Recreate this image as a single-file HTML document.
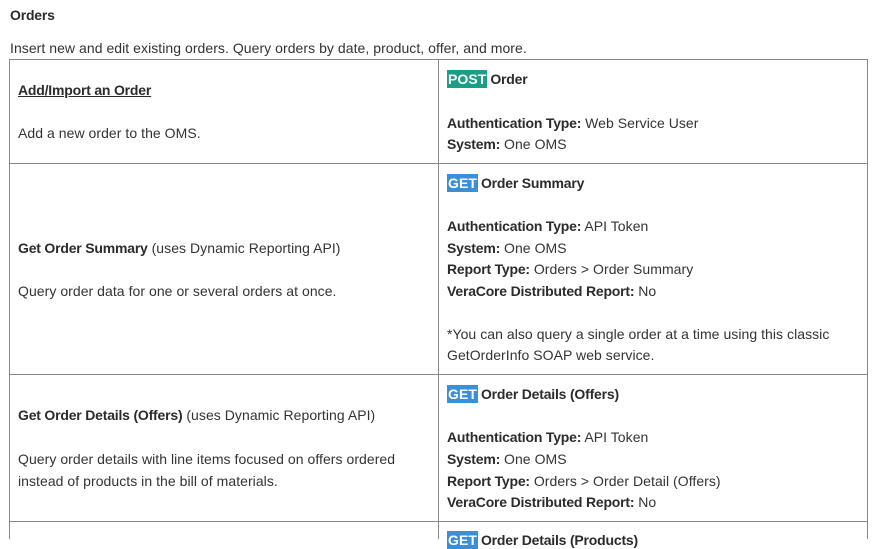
<!DOCTYPE html>
<html><head><meta charset="utf-8"><style>
*{margin:0;padding:0;box-sizing:border-box}
body{width:876px;height:539px;overflow:hidden;background:#fff;position:relative;font-family:"Liberation Sans",sans-serif;font-size:14px;color:#333;letter-spacing:0.05px}
.t{position:absolute;white-space:nowrap;line-height:17px}
b{font-weight:bold;color:#2b2b2b;letter-spacing:-0.2px}
.h{position:absolute;background:#888}
.v{position:absolute;width:1px;background:#888}
.bd{display:inline-block;color:#fff;font-weight:bold;padding:0 1px;line-height:18px;margin-right:3px}
.post{background:#1a9e85}.get{background:#3b8fd6}
</style></head><body>
<div class="t" style="left:10px;top:7px"><b>Orders</b></div>
<div class="t" style="left:10px;top:40px">Insert new and edit existing orders. Query orders by date, product, offer, and more.</div>
<div class="h" style="left:9px;top:59px;width:859px;height:1px"></div>
<div class="h" style="left:9px;top:163px;width:859px;height:1px"></div>
<div class="h" style="left:9px;top:374px;width:859px;height:1px"></div>
<div class="h" style="left:9px;top:521px;width:859px;height:1px"></div>
<div class="v" style="left:9px;top:59px;height:480px"></div>
<div class="v" style="left:438px;top:59px;height:480px"></div>
<div class="v" style="left:867px;top:59px;height:480px"></div>

<div class="t" style="left:18px;top:82px"><b style="text-decoration:underline">Add/Import an Order</b></div>
<div class="t" style="left:18px;top:125px">Add a new order to the OMS.</div>
<div class="t" style="left:447px;top:70px"><span class="bd post">POST</span><b>Order</b></div>
<div class="t" style="left:447px;top:115px"><b>Authentication Type:</b> Web Service User</div>
<div class="t" style="left:447px;top:136px"><b>System:</b> One OMS</div>

<div class="t" style="left:18px;top:240px"><b>Get Order Summary</b> (uses Dynamic Reporting API)</div>
<div class="t" style="left:18px;top:283px">Query order data for one or several orders at once.</div>
<div class="t" style="left:447px;top:174px"><span class="bd get">GET</span><b>Order Summary</b></div>
<div class="t" style="left:447px;top:218px"><b>Authentication Type:</b> API Token</div>
<div class="t" style="left:447px;top:240px"><b>System:</b> One OMS</div>
<div class="t" style="left:447px;top:261px"><b>Report Type:</b> Orders &gt; Order Summary</div>
<div class="t" style="left:447px;top:283px"><b>VeraCore Distributed Report:</b> No</div>
<div class="t" style="left:447px;top:326px">*You can also query a single order at a time using this classic</div>
<div class="t" style="left:447px;top:347px">GetOrderInfo SOAP web service.</div>

<div class="t" style="left:18px;top:407px"><b>Get Order Details (Offers)</b> (uses Dynamic Reporting API)</div>
<div class="t" style="left:18px;top:451px">Query order details with line items focused on offers ordered</div>
<div class="t" style="left:18px;top:473px">instead of products in the bill of materials.</div>
<div class="t" style="left:447px;top:385px"><span class="bd get">GET</span><b>Order Details (Offers)</b></div>
<div class="t" style="left:447px;top:429px"><b>Authentication Type:</b> API Token</div>
<div class="t" style="left:447px;top:451px"><b>System:</b> One OMS</div>
<div class="t" style="left:447px;top:473px"><b>Report Type:</b> Orders &gt; Order Detail (Offers)</div>
<div class="t" style="left:447px;top:494px"><b>VeraCore Distributed Report:</b> No</div>

<div class="t" style="left:447px;top:531px"><span class="bd get">GET</span><b>Order Details (Products)</b></div>
</body></html>
